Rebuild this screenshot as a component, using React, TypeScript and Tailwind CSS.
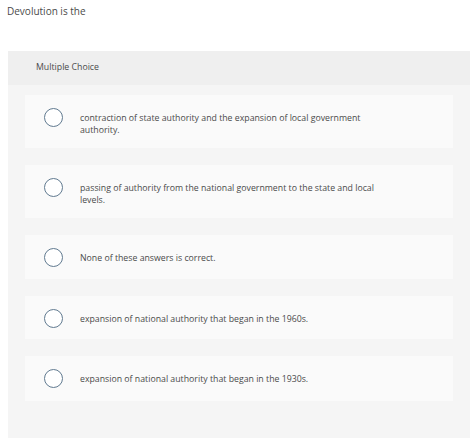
import React from 'react';

const options = [
  { text: 'contraction of state authority and the expansion of local government authority.', h: 'h-[53px]' },
  { text: 'passing of authority from the national government to the state and local levels.', h: 'h-[53px]' },
  { text: 'None of these answers is correct.', h: 'h-[44px]' },
  { text: 'expansion of national authority that began in the 1960s.', h: 'h-[43px]' },
  { text: 'expansion of national authority that began in the 1930s.', h: 'h-[45px]' },
];

export default function App() {
  return (
    <div className="w-[474px] h-[447px] bg-white font-['Open_Sans',sans-serif] text-[#4a4a4a]">
      <div className="pl-[7px] pt-[3px] text-[10px] leading-[16px]">Devolution is the</div>

      <div className="mt-[32px] ml-[8px] w-[462px] h-[387px] bg-[#f5f5f5]">
        <div className="h-[34px] bg-[#efefef] flex items-center pl-[28px] text-[8.75px]">
          Multiple Choice
        </div>

        <div className="flex flex-col gap-[17px] pt-[10px] px-[17px]">
          {options.map((o, i) => (
            <div key={i} className={`flex items-start bg-[#fafafa] pt-[13px] ${o.h}`}>
              <div className="w-[55px] flex justify-center shrink-0 pl-[1px]">
                <div className="w-[19px] h-[19px] rounded-full border-[1.5px] border-[#617a90] bg-white" />
              </div>
              <div className="pt-[4px] text-[8.75px] leading-[12px] max-w-[300px]">{o.text}</div>
            </div>
          ))}
        </div>
      </div>
    </div>
  );
}
